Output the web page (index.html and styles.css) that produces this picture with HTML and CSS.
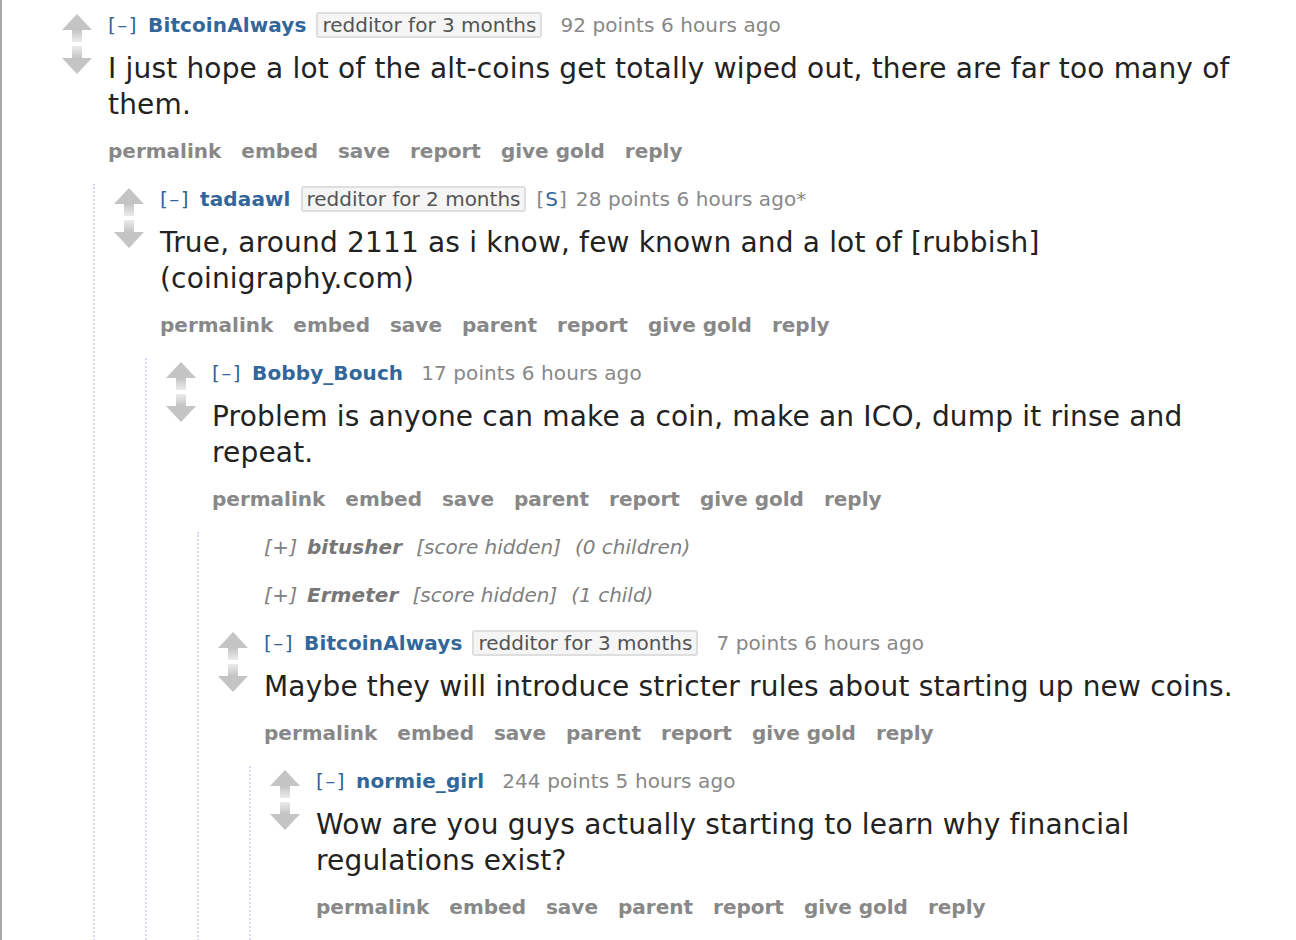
FILE: index.html
```html
<!DOCTYPE html>
<html>
<head>
<meta charset="utf-8">
<link rel="stylesheet" href="styles.css">
</head>
<body>
<div class="page">
  <div class="comment">
    <div class="midcol">
      <svg class="arrow" viewBox="0 0 30 28" width="30" height="28"><defs><linearGradient id="gu" x1="0" y1="0" x2="0" y2="1"><stop offset="0" stop-color="#c4c4c4"/><stop offset="1" stop-color="#ececec"/></linearGradient></defs><polygon points="15,0 30,16 0,16" fill="#c4c4c4"/><rect x="10" y="16" width="10" height="12" fill="url(#gu)"/></svg>
      <svg class="arrow" viewBox="0 0 30 28" width="30" height="28"><defs><linearGradient id="gd" x1="0" y1="0" x2="0" y2="1"><stop offset="0" stop-color="#ececec"/><stop offset="1" stop-color="#c4c4c4"/></linearGradient></defs><rect x="10" y="0" width="10" height="12" fill="url(#gd)"/><polygon points="0,12 30,12 15,28" fill="#c4c4c4"/></svg>
    </div>
    <div class="entry">
      <p class="tagline"><a class="expand">[–]</a><a class="author">BitcoinAlways</a><span class="flair">redditor for 3 months</span><span class="score">92 points 6 hours ago</span></p>
      <div class="md">I just hope a lot of the alt-coins get totally wiped out, there are far too many of them.</div>
      <ul class="buttons"><li>permalink</li><li>embed</li><li>save</li><li>report</li><li>give gold</li><li>reply</li></ul>
    </div>
  </div>
  <div class="child">
    <div class="comment">
      <div class="midcol">
        <svg class="arrow" viewBox="0 0 30 28" width="30" height="28"><polygon points="15,0 30,16 0,16" fill="#c4c4c4"/><rect x="10" y="16" width="10" height="12" fill="url(#gu)"/></svg>
        <svg class="arrow" viewBox="0 0 30 28" width="30" height="28"><rect x="10" y="0" width="10" height="12" fill="url(#gd)"/><polygon points="0,12 30,12 15,28" fill="#c4c4c4"/></svg>
      </div>
      <div class="entry">
        <p class="tagline"><a class="expand">[–]</a><a class="author">tadaawl</a><span class="flair">redditor for 2 months</span><span class="sub">[<a class="s">S</a>]</span><span class="score">28 points 6 hours ago*</span></p>
        <div class="md">True, around 2111 as i know, few known and a lot of [rubbish] (coinigraphy.com)</div>
        <ul class="buttons"><li>permalink</li><li>embed</li><li>save</li><li>parent</li><li>report</li><li>give gold</li><li>reply</li></ul>
      </div>
    </div>
    <div class="child">
      <div class="comment">
        <div class="midcol">
          <svg class="arrow" viewBox="0 0 30 28" width="30" height="28"><polygon points="15,0 30,16 0,16" fill="#c4c4c4"/><rect x="10" y="16" width="10" height="12" fill="url(#gu)"/></svg>
          <svg class="arrow" viewBox="0 0 30 28" width="30" height="28"><rect x="10" y="0" width="10" height="12" fill="url(#gd)"/><polygon points="0,12 30,12 15,28" fill="#c4c4c4"/></svg>
        </div>
        <div class="entry">
          <p class="tagline"><a class="expand">[–]</a><a class="author">Bobby_Bouch</a><span class="score">17 points 6 hours ago</span></p>
          <div class="md">Problem is anyone can make a coin, make an ICO, dump it rinse and repeat.</div>
          <ul class="buttons"><li>permalink</li><li>embed</li><li>save</li><li>parent</li><li>report</li><li>give gold</li><li>reply</li></ul>
        </div>
      </div>
      <div class="child">
        <div class="comment collapsed">
          <div class="midcol"></div>
          <div class="entry">
            <p class="tagline"><a class="expand">[+]</a><a class="author">bitusher</a><span class="hidden">[score hidden]</span><span class="count">(0 children)</span></p>
          </div>
        </div>
        <div class="comment collapsed">
          <div class="midcol"></div>
          <div class="entry">
            <p class="tagline"><a class="expand">[+]</a><a class="author">Ermeter</a><span class="hidden">[score hidden]</span><span class="count">(1 child)</span></p>
          </div>
        </div>
        <div class="comment">
          <div class="midcol">
            <svg class="arrow" viewBox="0 0 30 28" width="30" height="28"><polygon points="15,0 30,16 0,16" fill="#c4c4c4"/><rect x="10" y="16" width="10" height="12" fill="url(#gu)"/></svg>
            <svg class="arrow" viewBox="0 0 30 28" width="30" height="28"><rect x="10" y="0" width="10" height="12" fill="url(#gd)"/><polygon points="0,12 30,12 15,28" fill="#c4c4c4"/></svg>
          </div>
          <div class="entry">
            <p class="tagline"><a class="expand">[–]</a><a class="author">BitcoinAlways</a><span class="flair">redditor for 3 months</span><span class="score">7 points 6 hours ago</span></p>
            <div class="md">Maybe they will introduce stricter rules about starting up new coins.</div>
            <ul class="buttons"><li>permalink</li><li>embed</li><li>save</li><li>parent</li><li>report</li><li>give gold</li><li>reply</li></ul>
          </div>
        </div>
        <div class="child">
          <div class="comment last">
            <div class="midcol">
              <svg class="arrow" viewBox="0 0 30 28" width="30" height="28"><polygon points="15,0 30,16 0,16" fill="#c4c4c4"/><rect x="10" y="16" width="10" height="12" fill="url(#gu)"/></svg>
              <svg class="arrow" viewBox="0 0 30 28" width="30" height="28"><rect x="10" y="0" width="10" height="12" fill="url(#gd)"/><polygon points="0,12 30,12 15,28" fill="#c4c4c4"/></svg>
            </div>
            <div class="entry">
              <p class="tagline"><a class="expand">[–]</a><a class="author">normie_girl</a><span class="score">244 points 5 hours ago</span></p>
              <div class="md">Wow are you guys actually starting to learn why financial regulations exist?</div>
              <ul class="buttons"><li>permalink</li><li>embed</li><li>save</li><li>parent</li><li>report</li><li>give gold</li><li>reply</li></ul>
            </div>
          </div>
        </div>
      </div>
    </div>
  </div>
</div>
</body>
</html>
```
FILE: styles.css
```css
html, body {
  margin: 0;
  padding: 0;
  background: #fff;
  overflow: hidden;
}
body {
  font-family: "DejaVu Sans", Verdana, sans-serif;
  color: #222;
}
.page {
  border-left: 2px solid #a8a8a8;
  padding: 10px 40px 0 60px;
  min-height: 940px;
  box-sizing: border-box;
}
.comment {
  display: flex;
  padding: 2px 0 20px 0;
}
.comment.last {
  padding-bottom: 80px;
}
.midcol {
  width: 46px;
  flex: none;
  display: flex;
  flex-direction: column;
  gap: 4px;
  padding-top: 2px;
}
.arrow {
  display: block;
}
.entry {
  flex: 1;
  min-width: 0;
}
.tagline {
  margin: 0;
  font-size: 20px;
  line-height: 26px;
  height: 26px;
  color: #888;
  display: flex;
  align-items: center;
  white-space: nowrap;
}
.expand {
  color: #369;
  margin-right: 10px;
  letter-spacing: 1.5px;
}
.author {
  color: #369;
  font-weight: bold;
  margin-right: 10px;
  letter-spacing: 0.1px;
}
.flair {
  color: #545454;
  background: #f5f5f5;
  border: 2px solid #dedede;
  border-radius: 3px;
  padding: 0 4px;
  line-height: 22px;
  margin-right: 10px;
}
.sub {
  color: #888;
  margin-left: 0;
  margin-right: 0;
  letter-spacing: 1px;
}
.s {
  color: #369;
}
.score {
  margin-left: 8px;
  letter-spacing: 0.1px;
}
.md {
  margin-top: 13px;
  font-size: 28px;
  letter-spacing: 0.18px;
  line-height: 36px;
  color: #222;
}
.buttons {
  list-style: none;
  margin: 15px 0 0 0;
  padding: 0;
  display: flex;
  gap: 20px;
  font-size: 20px;
  line-height: 26px;
  font-weight: bold;
  color: #888;
}
.child {
  margin-left: 31px;
  border-left: 2px dotted #d8d8f6;
  padding-left: 19px;
}
.collapsed .tagline {
  font-style: italic;
  color: #808080;
}
.collapsed .expand {
  color: #808080;
  letter-spacing: 0.5px;
  margin-right: 9px;
}
.collapsed .author {
  color: #777;
  margin-right: 14px;
}
.hidden {
  margin-right: 14px;
}
```
